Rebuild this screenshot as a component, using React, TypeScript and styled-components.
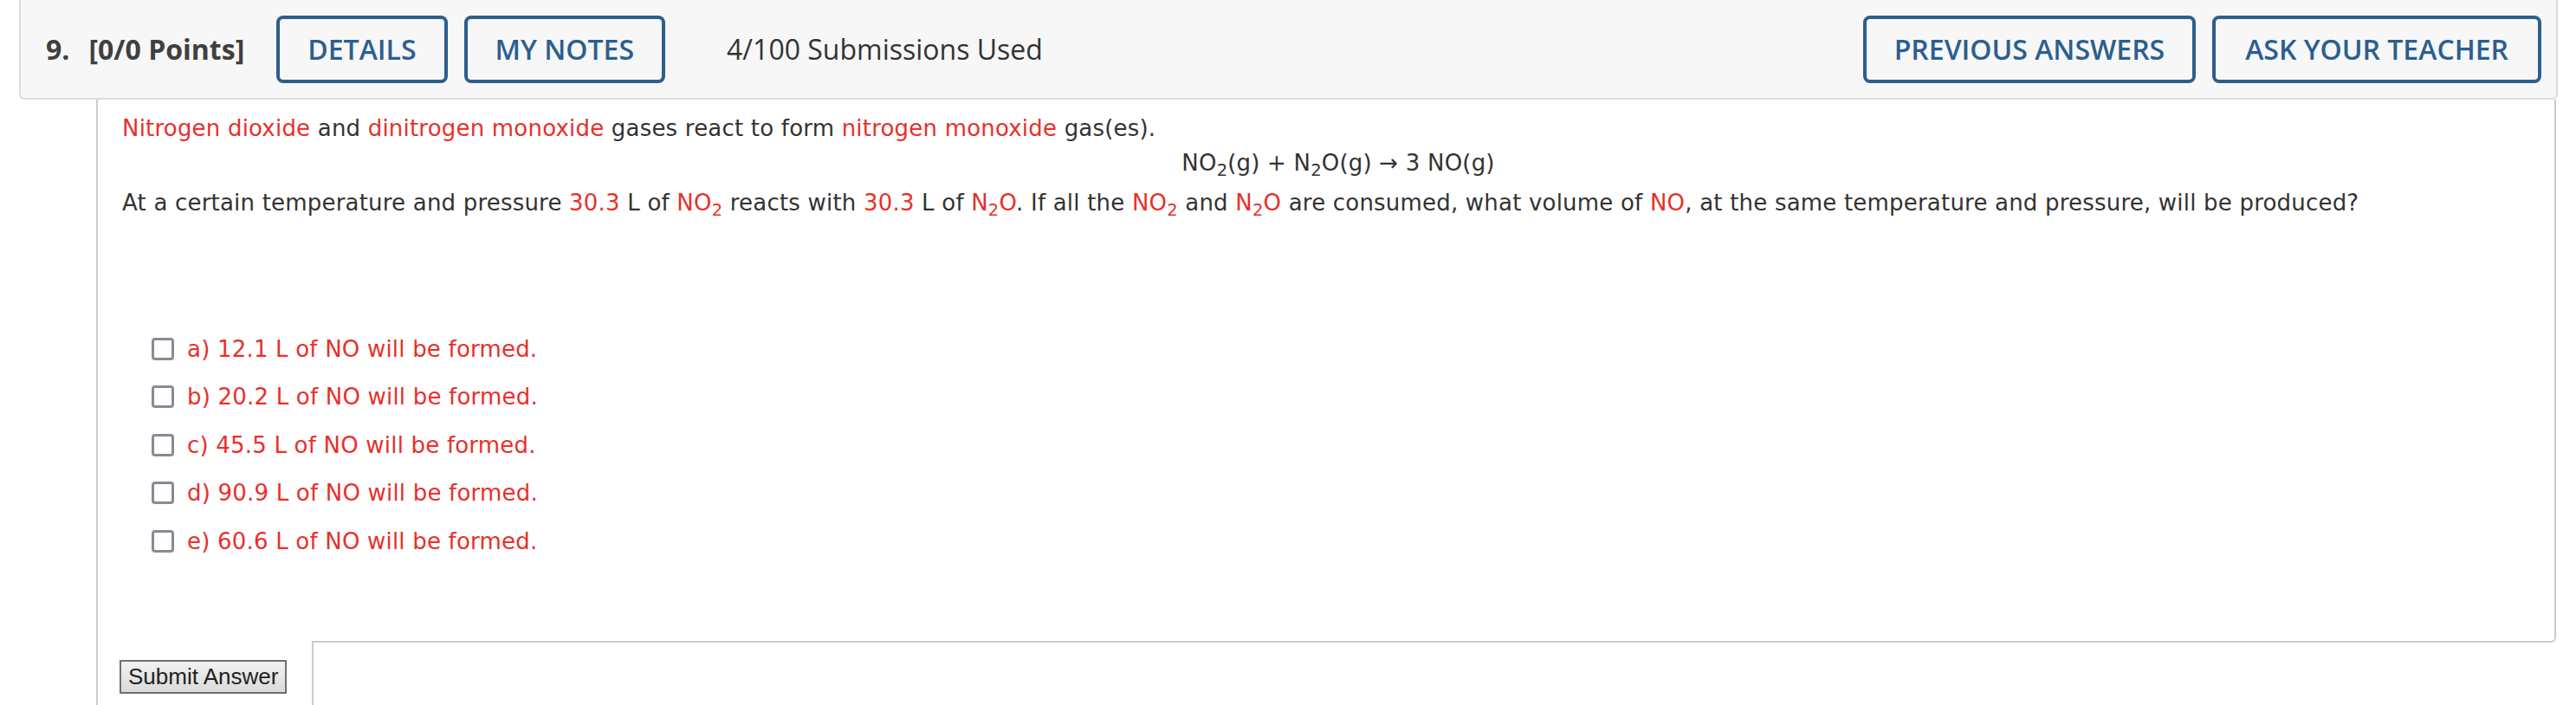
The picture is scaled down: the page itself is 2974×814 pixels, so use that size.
import React from "react";
import styled, { createGlobalStyle } from "styled-components";

const GlobalStyle = createGlobalStyle`
  html, body {
    margin: 0;
    padding: 0;
    background: #fff;
  }
  body {
    width: 2974px;
    font-family: "DejaVu Sans", Verdana, sans-serif;
  }
`;

const Root = styled.div`
  width: 2974px;
`;

const Header = styled.div`
  display: flex;
  align-items: center;
  height: 113px;
  margin: 0 21px 0 22px;
  padding: 0 17px 0 29px;
  background: #f7f7f7;
  border: 2px solid #dddddd;
  border-top: none;
  border-radius: 0 0 6px 6px;
  font-family: "Open Sans", "Noto Sans", sans-serif;
`;

const Number = styled.span`
  font-size: 32px;
  font-weight: 700;
  color: #404040;
  margin-right: 22px;
`;

const Points = styled.span`
  font-size: 32px;
  font-weight: 700;
  color: #404040;
  margin-right: 37px;
`;

const HeaderButton = styled.button<{ $pad: number }>`
  box-sizing: border-box;
  height: 78px;
  padding: 0 ${p => p.$pad}px;
  margin-right: 19px;
  background: transparent;
  border: 4px solid #2b5f8e;
  border-radius: 8px;
  font-family: "Open Sans", "Noto Sans", sans-serif;
  font-size: 32px;
  font-weight: 600;
  color: #2b5f8e;
  cursor: pointer;

  &:last-child {
    margin-right: 0;
  }
`;

const Submissions = styled.span`
  margin-left: 52px;
  font-size: 32px;
  color: #333;
`;

const RightButtons = styled.div`
  display: flex;
  margin-left: auto;
`;

const Question = styled.div`
  margin: 0 23px 0 111px;
  border-left: 2px solid #cccccc;
`;

const Body = styled.div`
  box-sizing: border-box;
  height: 627px;
  padding: 13px 0 0 28px;
  border-right: 2px solid #cccccc;
  border-bottom: 2px solid #cccccc;
  border-bottom-right-radius: 6px;
  font-size: 26px;
  line-height: 40px;
  letter-spacing: 0.2px;
  color: #333;
`;

const Line = styled.div`
  white-space: nowrap;
`;

const Equation = styled.div`
  text-align: center;
  white-space: nowrap;
`;

const Paragraph = styled.div`
  margin-top: 6px;
  white-space: nowrap;
`;

const Red = styled.span`
  color: #e8302a;
`;

const Sub = styled.sub`
  font-size: 0.75em;
  line-height: 0;
  vertical-align: -0.3em;
`;

const Choices = styled.div`
  margin-top: 121px;
  padding-left: 34px;
`;

const Choice = styled.label`
  display: flex;
  align-items: center;
  height: 55.5px;
  color: #e8302a;
  cursor: pointer;
`;

const Box = styled.input.attrs({ type: "checkbox" })`
  appearance: none;
  box-sizing: border-box;
  width: 26px;
  height: 26px;
  margin: 0 15px 0 0;
  background: #fff;
  border: 3px solid #8a8a95;
  border-radius: 4px;
`;

const Footer = styled.div`
  display: flex;
  margin-top: -2px;
`;

const SubmitCell = styled.div`
  width: 247px;
  height: 90px;
  padding: 22px 0 0 25px;
  box-sizing: border-box;
  background: #fff;
`;

const SubmitButton = styled.button`
  box-sizing: border-box;
  height: 39px;
  padding: 0 8px;
  background: linear-gradient(#f2f2f2, #dadada);
  border: 2px solid #707070;
  border-radius: 0;
  font-family: "Liberation Sans", Arial, sans-serif;
  font-size: 26px;
  color: #222;
  cursor: pointer;
`;

const ExtraPanel = styled.div`
  flex: 1;
  height: 90px;
  margin-right: 10px;
  border-top: 2px solid #cccccc;
  border-left: 2px solid #cccccc;
`;

const NO2 = () => (
  <Red>
    NO<Sub>2</Sub>
  </Red>
);

const N2O = () => (
  <Red>
    N<Sub>2</Sub>O
  </Red>
);

const choices = ["a) 12.1", "b) 20.2", "c) 45.5", "d) 90.9", "e) 60.6"];

export default function App() {
  return (
    <Root>
      <GlobalStyle />
      <Header>
        <Number>9.</Number>
        <Points>[0/0 Points]</Points>
        <HeaderButton $pad={32}>DETAILS</HeaderButton>
        <HeaderButton $pad={32}>MY NOTES</HeaderButton>
        <Submissions>4/100 Submissions Used</Submissions>
        <RightButtons>
          <HeaderButton $pad={32}>PREVIOUS ANSWERS</HeaderButton>
          <HeaderButton $pad={34}>ASK YOUR TEACHER</HeaderButton>
        </RightButtons>
      </Header>
      <Question>
        <Body>
          <Line>
            <Red>Nitrogen dioxide</Red> and <Red>dinitrogen monoxide</Red> gases
            react to form <Red>nitrogen monoxide</Red> gas(es).
          </Line>
          <Equation>
            NO<Sub>2</Sub>(g) + N<Sub>2</Sub>O(g) → 3 NO(g)
          </Equation>
          <Paragraph>
            At a certain temperature and pressure <Red>30.3</Red> L of <NO2 />{" "}
            reacts with <Red>30.3</Red> L of <N2O />. If all the <NO2 /> and{" "}
            <N2O /> are consumed, what volume of <Red>NO</Red>, at the same
            temperature and pressure, will be produced?
          </Paragraph>
          <Choices>
            {choices.map(c => (
              <Choice key={c}>
                <Box />
                {c} L of NO will be formed.
              </Choice>
            ))}
          </Choices>
        </Body>
        <Footer>
          <SubmitCell>
            <SubmitButton>Submit Answer</SubmitButton>
          </SubmitCell>
          <ExtraPanel />
        </Footer>
      </Question>
    </Root>
  );
}
